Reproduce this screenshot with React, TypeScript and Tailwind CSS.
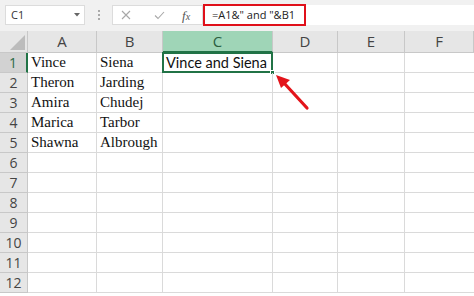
import React from "react";

const cols = ["A", "B", "C", "D", "E", "F"];

const data: Record<number, string[]> = {
  1: ["Vince", "Siena"],
  2: ["Theron", "Jarding"],
  3: ["Amira", "Chudej"],
  4: ["Marica", "Tarbor"],
  5: ["Shawna", "Albrough"],
};

const rows = Array.from({ length: 12 }, (_, i) => i + 1);

function FormulaBar() {
  return (
    <div className="flex h-[31px] items-start bg-[#f1f1f1] pt-[5px] font-['Open_Sans',sans-serif]">
      {/* Name box */}
      <div className="ml-[5px] flex h-[20px] w-[80px] items-center justify-between border border-[#dcdcdc] bg-white pl-[5px] pr-[4px] text-[11px] text-[#333]">
        <span>C1</span>
        <svg width="6" height="4" viewBox="0 0 6 4">
          <path d="M0 0 L6 0 L3 3.5 Z" fill="#666" />
        </svg>
      </div>
      <div className="flex w-[27px] flex-col items-center justify-center gap-[2px] self-stretch pb-[6px]">
        <span className="h-[2px] w-[2px] bg-[#aaa]" />
        <span className="h-[2px] w-[2px] bg-[#aaa]" />
        <span className="h-[2px] w-[2px] bg-[#aaa]" />
      </div>
      {/* Cancel / enter / fx */}
      <div className="flex h-[20px] w-[91px] items-center border border-[#dcdcdc] bg-white">
        <svg className="ml-[8px]" width="10" height="10" viewBox="0 0 10 10">
          <path d="M1 1 L9 9 M9 1 L1 9" stroke="#a8a8a8" strokeWidth="1.1" />
        </svg>
        <svg className="ml-[23px]" width="11" height="9" viewBox="0 0 11 9">
          <path d="M1 4.5 L4 7.5 L10 1" stroke="#a8a8a8" strokeWidth="1.1" fill="none" />
        </svg>
        <span className="ml-[17px] font-['Liberation_Serif',serif] text-[13px] italic leading-none text-[#555]">
          f<span className="text-[10px]">x</span>
        </span>
      </div>
      {/* Formula input */}
      <div className="flex h-[20px] flex-1 items-center bg-white">
        <div className="flex h-[22px] w-[103px] items-center whitespace-nowrap border-2 border-[#e0101a] pl-[7px] text-[11px] text-[#222]">
          =A1&amp;" and "&amp;B1
        </div>
      </div>
    </div>
  );
}

function Sheet() {
  return (
    <div className="relative grid grid-cols-[28px_69px_66px_110px_65px_67px_1fr] grid-rows-[22px_repeat(12,20px)] font-['Open_Sans',sans-serif]">
      {/* corner */}
      <div className="relative border-b border-r border-[#c8c8c8] bg-[#e6e6e6]">
        <svg className="absolute bottom-[2px] right-[2px]" width="15" height="15" viewBox="0 0 15 15">
          <path d="M15 0 L15 15 L0 15 Z" fill="#bcbcbc" />
        </svg>
      </div>
      {cols.map((c) =>
        c === "C" ? (
          <div
            key={c}
            className="flex items-center justify-center border-b-2 border-r border-b-[#217346] border-r-[#c8c8c8] bg-[#9fd5b7] text-[15px] text-[#2b5e3f]"
          >
            {c}
          </div>
        ) : (
          <div
            key={c}
            className="flex items-center justify-center border-b border-r border-[#c8c8c8] bg-[#e6e6e6] text-[15px] text-[#444]"
          >
            {c}
          </div>
        )
      )}
      {rows.map((r) => (
        <React.Fragment key={r}>
          <div
            className={`flex items-center justify-center border-b border-r text-[14px] ${
              r === 1
                ? "border-b-[#c8c8c8] border-r-2 border-r-[#217346] bg-[#d2d2d2] text-[#2b6a46]"
                : "border-[#c8c8c8] bg-[#e6e6e6] text-[#444]"
            }`}
          >
            {r}
          </div>
          <div className="flex items-center whitespace-nowrap border-b border-r border-[#dadada] pl-[3px] font-['Liberation_Serif',serif] text-[15px] text-[#111]">
            {data[r]?.[0]}
          </div>
          <div className="flex items-center whitespace-nowrap border-b border-r border-[#dadada] pl-[3px] font-['Liberation_Serif',serif] text-[15px] text-[#111]">
            {data[r]?.[1]}
          </div>
          <div className="relative flex items-center whitespace-nowrap border-b border-r border-[#dadada] pl-[3px] font-['Lato',sans-serif] text-[14.5px] text-[#111]">
            {r === 1 && (
              <>
                <span>Vince and Siena</span>
                <div className="pointer-events-none absolute -left-px -top-px h-[21px] w-[111px] border-2 border-[#217346]" />
                <div className="absolute -bottom-[3px] -right-[3px] h-[5px] w-[5px] border border-white bg-[#217346]" />
              </>
            )}
          </div>
          <div className="border-b border-r border-[#dadada]" />
          <div className="border-b border-r border-[#dadada]" />
          <div className="border-b border-[#dadada]" />
        </React.Fragment>
      ))}
      {/* red arrow */}
      <svg
        className="pointer-events-none absolute left-[270px] top-[40px]"
        width="45"
        height="40"
        viewBox="0 0 45 40"
      >
        <path d="M37 37 L14 12" stroke="#e3141b" strokeWidth="3.2" strokeLinecap="round" />
        <path d="M6 4 L20 9 L11 17 Z" fill="#e3141b" />
      </svg>
    </div>
  );
}

export default function App() {
  return (
    <div className="h-[296px] w-[474px] overflow-hidden bg-white">
      <FormulaBar />
      <Sheet />
    </div>
  );
}
